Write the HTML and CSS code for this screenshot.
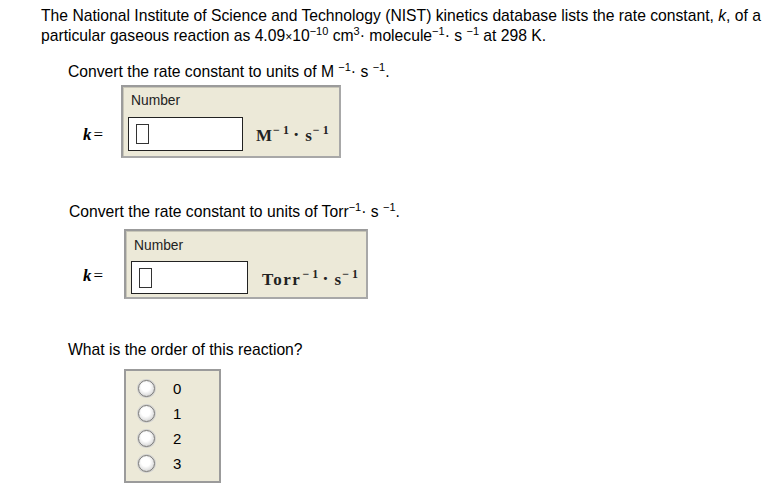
FILE: index.html
```html
<!DOCTYPE html>
<html>
<head>
<meta charset="utf-8">
<link rel="stylesheet" href="styles.css">
</head>
<body>
<p class="intro">The National Institute of Science and Technology (NIST) kinetics database lists the rate constant, <i>k</i>, of a<br>particular gaseous reaction as 4.09<span class="times">×</span>10<sup>−10</sup> cm<sup>3</sup>· molecule<sup>−1</sup>· s <sup>−1</sup> at 298 K.</p>

<p class="prompt p1">Convert the rate constant to units of M <sup>−1</sup>· s <sup>−1</sup>.</p>
<div class="answer a1">
  <div class="klabel"><b><i>k</i></b><span class="eq">=</span></div>
  <div class="box box1">
    <div class="numlabel">Number</div>
    <div class="inrow">
      <div class="field f1"><span class="caret"></span></div>
      <div class="units">M<sup>− 1</sup><span class="dot">·</span>s<sup>− 1</sup></div>
    </div>
  </div>
</div>

<p class="prompt p2">Convert the rate constant to units of Torr<sup>−1</sup>· s <sup>−1</sup>.</p>
<div class="answer a2">
  <div class="klabel"><b><i>k</i></b><span class="eq">=</span></div>
  <div class="box box2">
    <div class="numlabel">Number</div>
    <div class="inrow">
      <div class="field f2"><span class="caret"></span></div>
      <div class="units torr"><span class="tw">Torr</span><sup>− 1</sup><span class="dot">·</span>s<sup>− 1</sup></div>
    </div>
  </div>
</div>

<p class="prompt p3">What is the order of this reaction?</p>
<div class="radiobox">
  <div class="opt"><span class="radio"></span><span>0</span></div>
  <div class="opt"><span class="radio"></span><span>1</span></div>
  <div class="opt"><span class="radio"></span><span>2</span></div>
  <div class="opt"><span class="radio"></span><span>3</span></div>
</div>
</body>
</html>
```
FILE: styles.css
```css
body {
  margin: 0;
  padding: 6px 0 0 0;
  font-family: "Liberation Sans", Arial, sans-serif;
  font-size: 15.7px;
  color: #000;
  background: #fff;
}
sup {
  font-size: 11px;
  line-height: 0;
  vertical-align: 6px;
}
.intro {
  margin: 0;
  padding-left: 41px;
  line-height: 20px;
  white-space: nowrap;
}
.times {
  font-size: 12px;
}
.prompt {
  margin: 0;
  line-height: 20px;
  padding-left: 68px;
}
.p1 { margin-top: 15px; }
.p2 { margin-top: 44px; padding-left: 69px; }
.p3 { margin-top: 41px; }

.answer {
  display: flex;
  align-items: flex-end;
}
.a1 { margin: 3px 0 0 83px; }
.a2 { margin: 7px 0 0 83px; }
.klabel {
  font-family: "Liberation Serif", "Times New Roman", serif;
  font-size: 17px;
  width: 38px;
  padding-bottom: 13px;
}
.a2 .klabel { width: 41px; }
.eq { margin-left: 2px; }

.box {
  box-sizing: border-box;
  background: #ece9d8;
  border: 2px solid #9b9b9b;
  border-right-color: #a8a8a8;
  border-bottom-color: #a8a8a8;
  box-shadow: inset 1px 1px 0 #c8c6b8;
  padding: 6px 8px 5px 5px;
}
.box1 { width: 220px; height: 73px; }
.box2 { width: 244px; height: 70px; padding-top: 7px; }
.numlabel {
  font-size: 13.8px;
  color: #222;
  line-height: 16px;
  padding-left: 3px;
  height: 18px;
}
.box1 .numlabel { height: 24px; }
.box2 .numlabel { height: 23px; }
.inrow {
  display: flex;
  align-items: center;
}
.field {
  box-sizing: border-box;
  background: #fff;
  border: 1px solid #222;
  display: flex;
  align-items: center;
  padding-left: 7px;
  flex: none;
}
.f1 { width: 115px; height: 34px; }
.f2 { width: 117px; height: 33px; }
.caret {
  display: block;
  box-sizing: border-box;
  width: 13px;
  height: 20px;
  border: 1px solid #333;
}
.units {
  font-family: "Liberation Serif", "Times New Roman", serif;
  font-weight: bold;
  font-size: 17px;
  color: #222;
  margin-left: 13px;
  padding-top: 2px;
  white-space: nowrap;
}
.units.torr { margin-left: 14px; }
.tw { letter-spacing: 1.5px; }
.units sup {
  font-size: 12px;
  vertical-align: 7px;
  margin-left: 1px;
}
.dot { margin: 0 6px 0 4px; font-size: 19px; }

.radiobox {
  box-sizing: border-box;
  margin: 9px 0 0 124px;
  width: 97px;
  height: 114px;
  background: #ece9d8;
  border: 2px solid #9b9b9b;
  padding: 5px 0 0 12px;
}
.opt {
  display: flex;
  align-items: center;
  height: 25px;
  font-size: 15px;
}
.opt .radio {
  box-sizing: border-box;
  width: 17px;
  height: 17px;
  border-radius: 50%;
  border: 1px solid #7a7a7a;
  background: radial-gradient(circle at 45% 40%, #ffffff 0, #ffffff 35%, #e2e2e2 65%, #b0b0b0 100%);
  box-shadow: 0 0 0 1px #d0d0d0;
  margin-right: 18px;
}
```
